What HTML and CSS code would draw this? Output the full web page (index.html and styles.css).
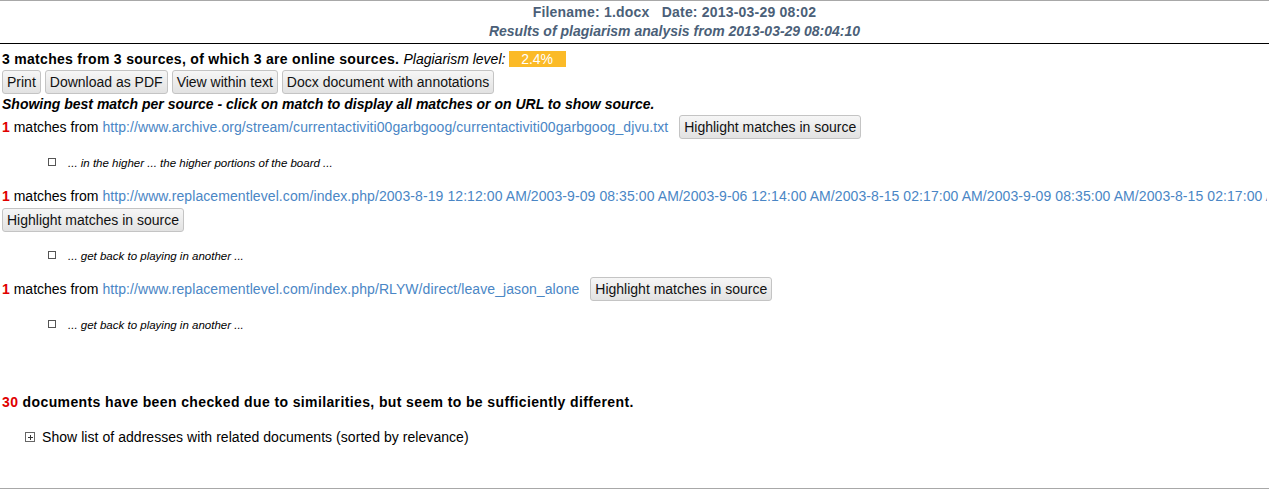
FILE: index.html
```html
<!DOCTYPE html>
<html lang="en">
  <head>
    <meta charset="UTF-8" />
    <title>Plagiarism analysis</title>
    <link rel="stylesheet" href="styles.css">
  </head>
  <body>
    <div class="report-header">
      <div class="file-info">Filename: 1.docx &nbsp; Date: 2013-03-29 08:02</div>
      <div class="analysis-date">Results of plagiarism analysis from 2013-03-29 08:04:10</div>
    </div>

    <div class="report">
      <div class="summary">
        3 matches from 3 sources, of which 3 are online sources.
        <span class="level-label">Plagiarism level:</span>
        <span class="level">2.4%</span>
      </div>
      <div class="actions">
        <button>Print</button>
        <button>Download as PDF</button>
        <button>View within text</button>
        <button>Docx document with annotations</button>
      </div>
      <div class="hint">Showing best match per source - click on match to display all matches or on URL to show source.</div>

      <div class="source">
        <div class="source-line">
          <span class="count">1</span> matches from
          <a href="#">http://www.archive.org/stream/currentactiviti00garbgoog/currentactiviti00garbgoog_djvu.txt</a>
          <button class="highlight">Highlight matches in source</button>
        </div>
        <ul class="snippets">
          <li><span class="box"></span>... in the higher ... the higher portions of the board ...</li>
        </ul>
      </div>

      <div class="source">
        <div class="source-line wide">
          <span class="count">1</span> matches from
          <a href="#">http://www.replacementlevel.com/index.php/2003-8-19 12:12:00 AM/2003-9-09 08:35:00 AM/2003-9-06 12:14:00 AM/2003-8-15 02:17:00 AM/2003-9-09 08:35:00 AM/2003-8-15 02:17:00 AM</a>
        </div>
        <button class="highlight first">Highlight matches in source</button>
        <ul class="snippets">
          <li><span class="box"></span>... get back to playing in another ...</li>
        </ul>
      </div>

      <div class="source">
        <div class="source-line">
          <span class="count">1</span> matches from
          <a href="#">http://www.replacementlevel.com/index.php/RLYW/direct/leave_jason_alone</a>
          <button class="highlight">Highlight matches in source</button>
        </div>
        <ul class="snippets">
          <li><span class="box"></span>... get back to playing in another ...</li>
        </ul>
      </div>

      <div class="checked"><span class="count">30</span> documents have been checked due to similarities, but seem to be sufficiently different.</div>
      <div class="related"><span class="plus"></span>Show list of addresses with related documents (sorted by relevance)</div>
    </div>
  </body>
</html>
```

FILE: styles.css
```css
body {
  margin: 0;
  font-family: "Liberation Sans", Arial, sans-serif;
  font-size: 14px;
  color: #000;
  background-color: white;
  border-top: 1px solid #a8a8a8;
  border-bottom: 1px solid #a8a8a8;
  height: 487px;
  overflow: hidden;
}
.report-header {
  text-align: center;
  color: #4b5f78;
  font-weight: bold;
  border-bottom: 1px solid #000;
  padding-top: 2px;
  height: 40px;
}
.file-info {
  line-height: 18px;
  padding-left: 80px;
  letter-spacing: 0.2px;
}
.analysis-date {
  font-style: italic;
  line-height: 20px;
  padding-left: 80px;
}
.report {
  padding: 6px 2px 0;
}
.summary {
  font-weight: bold;
  line-height: 18px;
  letter-spacing: 0.3px;
}
.level-label {
  font-weight: normal;
  font-style: italic;
  letter-spacing: 0;
}
.level {
  display: inline-block;
  background-color: #fbba27;
  color: white;
  font-weight: normal;
  letter-spacing: 0;
  width: 57px;
  text-align: center;
  line-height: 16px;
  margin-left: -1px;
}
.actions {
  margin-top: 2px;
  display: flex;
  gap: 4px;
}
button {
  font-family: "Liberation Sans", Arial, sans-serif;
  font-size: 14px;
  color: #111;
  background: linear-gradient(#f6f6f6, #e2e2e2);
  border: 1px solid #c4c4c4;
  border-radius: 3px;
  padding: 0 4px;
  height: 24px;
  line-height: 22px;
}
.hint {
  font-weight: bold;
  font-style: italic;
  line-height: 18px;
  margin-top: 1px;
}
.source-line {
  line-height: 24px;
  margin-top: 2px;
  white-space: nowrap;
}
.source-line.wide {
  overflow: hidden;
}
.count {
  color: #e00000;
  font-weight: bold;
}
a {
  color: #4a86c5;
  text-decoration: none;
  letter-spacing: 0.08px;
}
.highlight {
  margin-left: 7px;
  padding: 0 4px;
}
.highlight.first {
  margin-left: 0;
}
.snippets {
  list-style: none;
  margin: 16px 0 13px;
  padding-left: 46px;
  font-size: 11.5px;
  font-style: italic;
  line-height: 16px;
}
.box {
  display: inline-block;
  width: 6px;
  height: 6px;
  border: 1px solid #555;
  margin-right: 12px;
  vertical-align: 1px;
}
.checked {
  font-weight: bold;
  line-height: 18px;
  letter-spacing: 0.38px;
  margin-top: 60px;
}
.related {
  margin-top: 17px;
  padding-left: 23px;
  line-height: 18px;
  letter-spacing: 0.05px;
}
.plus {
  display: inline-block;
  position: relative;
  width: 8px;
  height: 8px;
  border: 1px solid #666;
  margin-right: 7px;
  vertical-align: 0;
}
.plus::before,
.plus::after {
  content: "";
  position: absolute;
  background-color: #333;
}
.plus::before {
  left: 2px;
  top: 4px;
  width: 5px;
  height: 1px;
}
.plus::after {
  left: 4px;
  top: 2px;
  width: 1px;
  height: 5px;
}
```
